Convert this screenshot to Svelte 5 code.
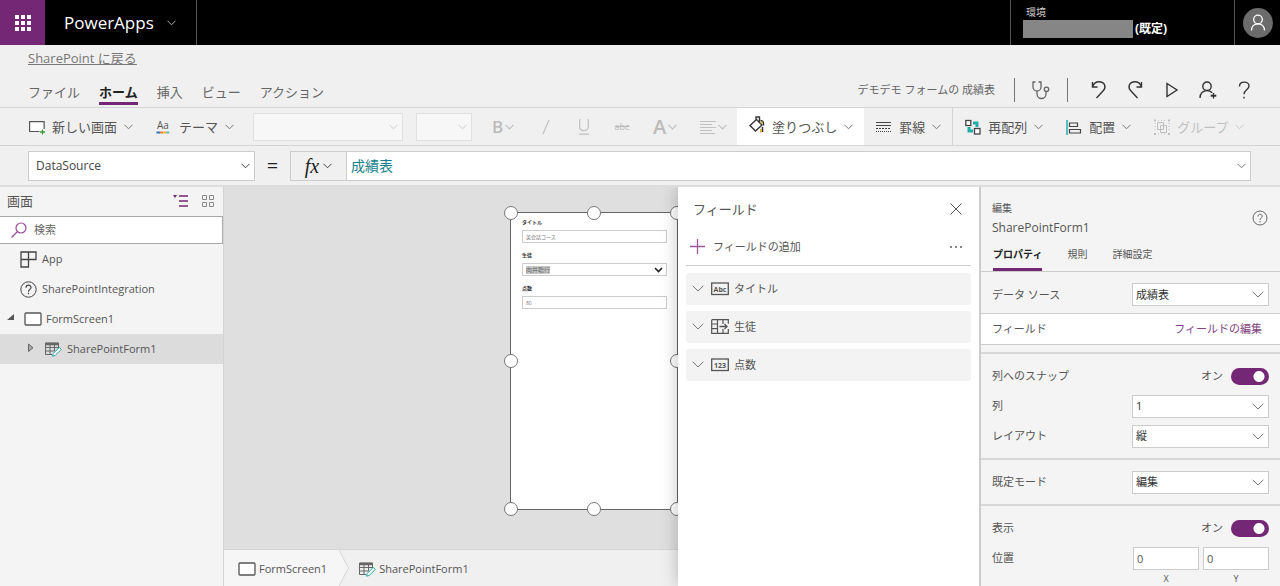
<script>
  let query = $state('');
  let property = $state('DataSource');
  let formula = $state('成績表');
  let snap = $state(true);
  let visible = $state(true);
  let posX = $state('0');
  let posY = $state('0');

  const menus = ['ファイル', 'ホーム', '挿入', 'ビュー', 'アクション'];
  const tabs = ['プロパティ', '規則', '詳細設定'];
  const fields = [
    { name: 'タイトル', kind: 'text' },
    { name: '生徒', kind: 'lookup' },
    { name: '点数', kind: 'number' }
  ];
  const handles = ['nw', 'n', 'ne', 'w', 'e', 'sw', 's', 'se'];
</script>

{#snippet chevron()}
  <svg class="chev" width="9" height="6" viewBox="0 0 9 6"><path d="M.5.8 4.5 4.8 8.5.8" /></svg>
{/snippet}

{#snippet wideChevron()}
  <svg class="chev" width="12" height="7" viewBox="0 0 12 7"><path d="M.7.8 6 6 11.3.8" /></svg>
{/snippet}

{#snippet screenIcon()}
  <svg width="18" height="14" viewBox="0 0 18 14"><rect x="1" y="1" width="16" height="12" rx="1" fill="#fff" stroke="#555" stroke-width="1.3" /></svg>
{/snippet}

{#snippet formIcon()}
  <svg width="17" height="15" viewBox="0 0 17 15" fill="none" stroke="#666">
    <path d="M7 12.5H.5V1h13v5M.5 5.500h13M.5 9h9M5 3v9.500M9.500 3v6" />
    <path d="M.5 2h13" stroke-width="2.5" />
    <path d="m7.500 14.200.8-2.800 6-6 2 2-6 6z" fill="#fff" stroke="#1fa3a3" />
  </svg>
{/snippet}

{#snippet fieldIcon(kind)}
  <svg width="18" height="15" viewBox="0 0 18 15" fill="none" stroke="#555">
    {#if kind === 'lookup'}
      <path d="M6.500.7v13.600M.7.7h16.600v4M.7.7v13.600h16.600V10M.7 5h6M.7 9.700h6M12 .7V5M12 10v4.300" stroke-width="1.2" />
      <path d="M8.500 7.500h8M13.500 5l2.500 2.500-2.500 2.500" stroke-width="1.3" />
    {:else}
      <rect x=".7" y="2" width="16.6" height="11.500" stroke-width="1.3" />
      <text x="9" y="10.500" text-anchor="middle">{kind === 'text' ? 'Abc' : '123'}</text>
    {/if}
  </svg>
{/snippet}

<div class="app">
  <header class="top">
    <button class="waffle" aria-label="アプリ起動ツール">
      <svg width="16" height="16" viewBox="0 0 16 16" fill="#fff">
        {#each [0, 6, 12] as y}
          {#each [0, 6, 12] as x}
            <rect {x} {y} width="4" height="4" />
          {/each}
        {/each}
      </svg>
    </button>
    <button class="brand">PowerApps {@render chevron()}</button>
    <div class="env">
      <span class="env-label">環境</span>
      <div class="env-name"><span class="mask"></span><b>(既定)</b></div>
    </div>
    <button class="account" aria-label="アカウント">
      <svg width="30" height="30" viewBox="0 0 30 30" fill="none" stroke="#fff" stroke-width="1.3">
        <circle cx="15" cy="15" r="15" fill="#6b6b6b" stroke="none" />
        <circle cx="15" cy="11.5" r="4.3" />
        <path d="M8.500 22.500c0-4 2.500-6.700 6.500-6.700s6.500 2.700 6.500 6.700" />
      </svg>
    </button>
  </header>

  <div class="ribbon">
    <div class="ribbon-left">
      <a class="back" href="#sharepoint">SharePoint に戻る</a>
      <nav class="menus">
        {#each menus as menu}
          <button class:active={menu === 'ホーム'}>{menu}</button>
        {/each}
      </nav>
    </div>
    <div class="ribbon-right">
      <span class="doc">デモデモ フォームの 成績表</span>
      <i class="rule"></i>
      <button class="check" aria-label="アプリ チェッカー">
        <svg width="20" height="20" viewBox="0 0 20 20" fill="none" stroke="#666" stroke-width="1.3">
          <path d="M4.500 2H2v5a4 4 0 0 0 8 0V2H7.500M6 11v3a4.500 4.500 0 0 0 9 0v-2.500" />
          <circle cx="15.500" cy="9.300" r="2.200" />
        </svg>
      </button>
      <i class="rule"></i>
      <div class="actions">
        <button aria-label="元に戻す">
          <svg width="20" height="20" viewBox="0 0 20 20"><path d="M2.500 2v5h5M2.500 6.700C4 3 6.500 1.800 9 1.800c6 0 7.500 5.700 4.200 9L6.500 18" /></svg>
        </button>
        <button aria-label="やり直し">
          <svg width="20" height="20" viewBox="0 0 20 20"><path d="M15.500 2v5h-5M15.500 6.700C14 3 11.500 1.800 9 1.800c-6 0-7.500 5.700-4.200 9l6.700 7.200" /></svg>
        </button>
        <button aria-label="プレビュー">
          <svg width="20" height="20" viewBox="0 0 20 20"><path d="M5 3.500v13l10-6.500z" /></svg>
        </button>
        <button aria-label="共有">
          <svg width="20" height="20" viewBox="0 0 20 20"><circle cx="9" cy="6.2" r="4.2" /><path d="M2 18c0-4.500 3-7.400 7-7.400 2.300 0 4 .8 5.200 2.200M15.500 13v5.500" /><path d="M12.700 15.700h5.600" stroke-width="2" /></svg>
        </button>
        <button aria-label="ヘルプ">
          <svg width="20" height="20" viewBox="0 0 20 20"><path d="M5.500 6.500C5.500.5 15 1 15 6c0 3.800-5 3.800-5 8.300M10 16.800v1.700" /></svg>
        </button>
      </div>
    </div>
  </div>

  <div class="toolbar">
    <button class="tool">
      <svg width="16" height="16" viewBox="0 0 16 16" fill="none"><path d="M10.500 12.500H.6V2.600h14.500V10" fill="#fff" stroke="#555" stroke-width="1.2" /><path d="M13.500 10.500v5M11 13h5" stroke="#3a9a3a" stroke-width="1.3" /></svg>
      新しい画面 {@render chevron()}
    </button>
    <button class="tool">
      <svg width="16" height="16" viewBox="0 0 16 16"><text class="aa" x="1" y="10">Aa</text><path d="M.5 13.500h3.500" stroke="#3673b5" stroke-width="2" /><path d="M4 13.500h3.300" stroke="#e8813a" stroke-width="2" /><path d="M7.300 13.500h3" stroke="#e8b23a" stroke-width="2" /><path d="M10.300 13.500h3" stroke="#67b8a8" stroke-width="2" /></svg>
      テーマ {@render chevron()}
    </button>
    <span class="pick font-name"><select disabled aria-label="フォント"><option></option></select>{@render chevron()}</span>
    <span class="pick font-size"><select disabled aria-label="フォント サイズ"><option></option></select>{@render chevron()}</span>
    <div class="text-tools">
      <button class="with-menu" disabled aria-label="太さ"><b>B</b>{@render chevron()}</button>
      <button disabled aria-label="斜体"><svg width="10" height="16" viewBox="0 0 10 16"><path d="M8 1 2 15" /></svg></button>
      <button disabled aria-label="下線"><svg width="12" height="16" viewBox="0 0 12 16"><path d="M1.700 0v7.500c0 5.500 8.600 5.500 8.600 0V0M1 15.200h10" /></svg></button>
      <button disabled class="strike">abc</button>
      <button class="with-menu" disabled aria-label="文字色"><b class="big">A</b>{@render chevron()}</button>
      <button class="with-menu" disabled aria-label="配置">
        <svg width="16" height="16" viewBox="0 0 16 16"><path d="M0 2.500h16M0 5.500h12M0 8.500h16M0 11.500h12M0 14.500h15" /></svg>{@render chevron()}
      </button>
    </div>
    <button class="tool on">
      <svg class="bucket" width="16" height="18" viewBox="0 0 16 18" fill="none"><path d="M7.500 3.500 1 9.500l5.500 5.500 6.500-6L7 3V1h3.500v6" fill="#fff" stroke="#333" stroke-width="1.4" /><path d="M11.500 4.500c2.500 0 3.300 2 3 5M13.500 11v5" stroke="#333" stroke-width="1.5" /><path d="M12.500 5.500v2M12 13v3.500" stroke="#e2b33c" stroke-width="2" /></svg>
      塗りつぶし {@render chevron()}
    </button>
    <button class="tool">
      <svg width="16" height="16" viewBox="0 0 16 16" stroke="#444"><path d="M0 3.500h15M0 6.500h15" /><path d="M0 9.500h15" stroke-dasharray="2 1" /><path d="M0 12.500h15" stroke-dasharray="1 1" /></svg>
      罫線 {@render chevron()}
    </button>
    <i class="split"></i>
    <button class="tool">
      <svg width="16" height="16" viewBox="0 0 16 16" fill="none"><path d="M4 8v4h4M8 4h4v4" stroke="#22adad" stroke-width="3" /><rect x=".8" y="1.5" width="5" height="5" fill="#fff" stroke="#444" stroke-width="1.3" /><rect x="9.5" y="9.5" width="5.500" height="5.500" fill="#fff" stroke="#444" stroke-width="1.3" /></svg>
      再配列 {@render chevron()}
    </button>
    <button class="tool">
      <svg width="16" height="16" viewBox="0 0 16 16" fill="none"><path d="M1 1v15" stroke="#22adad" stroke-width="1.5" /><path d="M3.500 4h8v3.500h-8zM3.500 10.500h11V14h-11z" stroke="#444" stroke-width="1.2" /></svg>
      配置 {@render chevron()}
    </button>
    <button class="tool" disabled>
      <svg width="16" height="16" viewBox="0 0 16 16" fill="none" stroke="#c0c0c0"><path d="M3.500 3.500h6v7h-6zM6.500 6.500h6v7h-6z" /><path d="M0 1.500h2M14 1.500h2M0 15h2M14 15h2" stroke-width="2" /><path d="M4 1.500h8M4 15h8M1 4v9M15 4v9" stroke-dasharray="1 2" /></svg>
      グループ {@render chevron()}
    </button>
  </div>

  <div class="formula">
    <span class="pick property">
      <select bind:value={property} aria-label="プロパティの選択"><option>DataSource</option></select>{@render chevron()}
    </span>
    <span class="equals">=</span>
    <button class="fx"><i>fx</i>{@render chevron()}</button>
    <div class="expression">
      <input bind:value={formula} aria-label="数式" />{@render chevron()}
    </div>
  </div>

  <main class="work">
    <aside class="tree">
      <div class="tree-head">
        <h2>画面</h2>
        <button aria-label="ツリー表示"><svg width="16" height="14" viewBox="0 0 16 14"><path d="M0 1h4L2 4z" fill="#742774" /><path d="M6 2h9M6 7h9M6 12h9" stroke="#742774" stroke-width="1.5" /></svg></button>
        <button aria-label="サムネイル表示"><svg width="14" height="14" viewBox="0 0 14 14" fill="none" stroke="#888"><path d="M1.500 1.500h4v4h-4zM8.500 1.500h4v4h-4zM1.500 8.500h4v4h-4zM8.500 8.500h4v4h-4z" /></svg></button>
      </div>
      <label class="search">
        <svg width="16" height="16" viewBox="0 0 16 16" fill="none" stroke="#9a4a9a" stroke-width="1.2"><circle cx="10" cy="6" r="5" /><path d="M6.500 9.500.5 15.500" /></svg>
        <input bind:value={query} placeholder="検索" aria-label="検索" />
      </label>
      <ul>
        <li class="root">
          <svg width="17" height="17" viewBox="0 0 17 17" fill="none" stroke="#444" stroke-width="1.3"><path d="M1 1h15v7.500H1zM8.500 1v15H1V1" /></svg>
          App
        </li>
        <li class="root">
          <svg width="17" height="17" viewBox="0 0 17 17" fill="none" stroke="#444"><circle cx="8.5" cy="8.5" r="7.7" /><path d="M6 6.700c0-3.500 5-3.300 5-.3 0 2-2.500 2-2.500 4.300M8.500 11.800v1.400" stroke-width="1.2" /></svg>
          SharePointIntegration
        </li>
        <li class="screen">
          <svg width="8" height="16" viewBox="0 0 8 16"><path d="M7 3v6H0z" fill="#555" /></svg>
          {@render screenIcon()} FormScreen1
        </li>
        <li class="control selected">
          <svg width="8" height="16" viewBox="0 0 8 16"><path d="M1.500 3v7.500L6 6.700z" fill="#aaa" stroke="#666" /></svg>
          {@render formIcon()} SharePointForm1
        </li>
      </ul>
    </aside>

    <section class="stage">
      <div class="canvas">
        <div class="form-card">
          <label for="card-title">タイトル</label>
          <input id="card-title" value="英会話コース" />
          <label for="card-student">生徒</label>
          <button id="card-student" class="card-pick"><mark>向井聡行</mark><svg width="9" height="6" viewBox="0 0 9 6"><path d="M1 1l3.500 3.500L8 1" fill="none" stroke="#222" stroke-width="1.6" /></svg></button>
          <label for="card-score">点数</label>
          <input id="card-score" value="80" />
          {#each handles as handle}
            <span class="handle {handle}"></span>
          {/each}
        </div>
      </div>
      <footer class="crumbs">
        <a class="crumb" href="#screen">{@render screenIcon()} FormScreen1</a>
        <svg class="arrow" width="11" height="36" viewBox="0 0 11 36"><path d="M0 0 9.500 18 0 36z" fill="#f6f6f6" /><path d="M0 0 9.500 18 0 36" fill="none" stroke="#d6d6d6" /></svg>
        <a class="crumb last" href="#form">{@render formIcon()} SharePointForm1</a>
      </footer>
      <div class="fields">
        <div class="fields-head">
          <h2>フィールド</h2>
          <button aria-label="閉じる"><svg width="12" height="12" viewBox="0 0 12 12"><path d="M.5.5l11 11M11.500.5l-11 11" stroke="#555" /></svg></button>
        </div>
        <div class="fields-add">
          <button class="add"><svg width="15" height="15" viewBox="0 0 15 15"><path d="M7.500 0v15M0 7.500h15" stroke="#9a5a9a" stroke-width="1.3" /></svg>フィールドの追加</button>
          <button aria-label="その他"><svg width="12" height="2" viewBox="0 0 12 2" fill="#888"><path d="M0 0h2v2H0zM5 0h2v2H5zM10 0h2v2h-2z" /></svg></button>
        </div>
        {#each fields as field}
          <button class="field">{@render wideChevron()}{@render fieldIcon(field.kind)}{field.name}</button>
        {/each}
      </div>
    </section>

    <aside class="props">
      <div class="props-head">
        <div>
          <span class="mode">編集</span>
          <h2>SharePointForm1</h2>
        </div>
        <button aria-label="ヘルプ"><svg width="16" height="16" viewBox="0 0 16 16" fill="none" stroke="#666"><circle cx="8" cy="8" r="7" /><path d="M6 6.500c0-3 4.200-2.800 4.200-.3 0 1.800-2.200 1.800-2.200 3.800M8 11v1.300" /></svg></button>
      </div>
      <nav class="tabs">
        {#each tabs as tab}
          <button class:active={tab === 'プロパティ'}>{tab}</button>
        {/each}
      </nav>
      <div class="row source">
        <label for="source">データ ソース</label>
        <span class="pick"><select id="source"><option>成績表</option></select>{@render wideChevron()}</span>
      </div>
      <div class="row edit">
        <span>フィールド</span>
        <a href="#fields">フィールドの編集</a>
      </div>
      <div class="group">
        <div class="row">
          <label for="snap">列へのスナップ</label>
          <span class="state">オン</span><input id="snap" class="toggle" type="checkbox" bind:checked={snap} />
        </div>
        <div class="row">
          <label for="columns">列</label>
          <span class="pick"><select id="columns"><option>1</option></select>{@render wideChevron()}</span>
        </div>
        <div class="row">
          <label for="layout">レイアウト</label>
          <span class="pick"><select id="layout"><option>縦</option></select>{@render wideChevron()}</span>
        </div>
      </div>
      <div class="group">
        <div class="row">
          <label for="mode">既定モード</label>
          <span class="pick"><select id="mode"><option>編集</option></select>{@render wideChevron()}</span>
        </div>
      </div>
      <div class="group">
        <div class="row">
          <label for="visible">表示</label>
          <span class="state">オン</span><input id="visible" class="toggle" type="checkbox" bind:checked={visible} />
        </div>
        <div class="row">
          <span>位置</span>
          <div class="pair">
            <input id="pos-x" bind:value={posX} />
            <input id="pos-y" bind:value={posY} />
          </div>
        </div>
        <div class="axes">
          <label for="pos-x">X</label>
          <label for="pos-y">Y</label>
        </div>
      </div>
    </aside>
  </main>
</div>

<style>
  :global(body) {
    background: #f0f0f0;
  }
  .app {
    display: flex;
    flex-direction: column;
    height: 100vh;
    overflow: hidden;
    background: #f0f0f0;
    color: #555;
    font: 13px/20px "Open Sans", "Noto Sans CJK JP", sans-serif;
  }
  .app * {
    box-sizing: border-box;
  }
  svg {
    flex: none;
  }
  button, input, select {
    margin: 0;
    padding: 0;
    border: 0;
    border-radius: 0;
    background: none;
    color: inherit;
    font: inherit;
    outline: none;
  }
  button {
    display: flex;
    align-items: center;
    white-space: nowrap;
  }
  h2 {
    margin: 0;
    font-weight: 400;
  }
  a {
    color: inherit;
    text-decoration: none;
  }
  .chev {
    fill: none;
    stroke: #777;
  }

  .top {
    display: flex;
    flex: none;
    height: 45px;
    background: #000;
    color: #fff;
  }
  .waffle {
    width: 45px;
    justify-content: center;
    background: #742774;
  }
  .brand {
    gap: 13px;
    padding: 0 20px 0 19px;
    border-right: 1px solid #555;
    font-size: 17px;
  }
  .brand .chev {
    stroke: #aaa;
  }
  .env {
    width: 225px;
    margin-left: auto;
    padding: 4px 12px;
    border: 1px solid #555;
    border-width: 0 1px;
  }
  .env-label {
    display: block;
    padding-left: 3px;
    color: #ccc;
    font-size: 10px;
    line-height: 16px;
  }
  .env-name {
    display: flex;
    align-items: center;
    gap: 2px;
    line-height: 18px;
    font-size: 12px;
  }
  .mask {
    width: 110px;
    height: 18px;
    background: #868686;
  }
  .account {
    width: 45px;
    justify-content: center;
  }

  .ribbon {
    display: flex;
    flex: none;
    justify-content: space-between;
    height: 63px;
    border-bottom: 1px solid #d4d4d4;
  }
  .ribbon-left {
    display: flex;
    flex-direction: column;
    align-items: flex-start;
    padding: 3px 0 2px 28px;
  }
  .back {
    color: #777;
    text-decoration: underline;
  }
  .menus {
    display: flex;
    gap: 19px;
    margin-top: auto;
  }
  .menus button {
    border-bottom: 3px solid transparent;
    color: #666;
  }
  .menus .active {
    border-color: #742774;
    color: #222;
    font-weight: 700;
  }
  .ribbon-right {
    display: flex;
    align-items: center;
    align-self: flex-end;
    height: 34px;
    padding-right: 18px;
  }
  .doc {
    margin-right: 19px;
    color: #666;
    font-size: 11px;
  }
  .rule {
    width: 1px;
    height: 24px;
    background: #777;
  }
  .check {
    margin: 0 16px;
  }
  .actions {
    display: flex;
    margin-left: 14px;
  }
  .actions button {
    width: 36px;
    justify-content: center;
  }
  .actions svg {
    fill: none;
    stroke: #333;
    stroke-width: 1.4;
  }

  .toolbar {
    display: flex;
    flex: none;
    align-items: center;
    height: 38px;
    padding-left: 17px;
    border-bottom: 1px solid #d4d4d4;
  }
  .tool {
    gap: 7px;
    height: 37px;
    padding: 0 11px 0 12px;
    color: #555;
  }
  .tool:disabled {
    color: #c0c0c0;
  }
  .tool:disabled .chev {
    stroke: #c8c8c8;
  }
  .tool.on {
    background: #fff;
  }
  .bucket {
    margin-bottom: 4px;
  }
  .aa {
    font-size: 10px;
    fill: #555;
  }
  .split {
    width: 1px;
    height: 37px;
    background: #d4d4d4;
  }
  .pick {
    display: grid;
    align-items: center;
    background: #fff;
    border: 1px solid #ccc;
  }
  .pick > :global(*) {
    grid-area: 1 / 1;
  }
  .pick select {
    width: 100%;
    height: 100%;
    appearance: none;
    opacity: 1;
  }
  .pick .chev {
    justify-self: end;
    margin-right: 4px;
    pointer-events: none;
  }
  .font-name, .font-size {
    height: 28px;
    background: #f7f7f7;
    border-color: #e0e0e0;
  }
  .font-name {
    width: 150px;
    margin: 0 13px 0 8px;
  }
  .font-size {
    width: 56px;
    margin-right: 7px;
  }
  .font-name .chev, .font-size .chev {
    stroke: #c8c8c8;
  }
  .text-tools {
    display: flex;
    color: #bbb;
  }
  .text-tools button {
    width: 38px;
    height: 37px;
    justify-content: center;
  }
  .text-tools .with-menu {
    width: 48px;
    gap: 2px;
  }
  .text-tools svg {
    fill: none;
    stroke: #c0c0c0;
    stroke-width: 1.2;
  }
  .text-tools b {
    font-size: 17px;
    font-weight: 600;
  }
  .text-tools .big {
    font-size: 20px;
  }
  .text-tools .strike {
    font-size: 9px;
    text-decoration: line-through;
  }

  .formula {
    display: flex;
    flex: none;
    align-items: center;
    height: 41px;
    padding: 0 29px 0 28px;
    border-bottom: 2px solid #ddd;
  }
  .property {
    width: 227px;
    height: 30px;
    color: #444;
    font-size: 12px;
  }
  .property select {
    padding-left: 7px;
  }
  .property .chev, .fx .chev {
    stroke: #444;
  }
  .equals {
    width: 35px;
    color: #222;
    font-size: 20px;
    text-align: center;
  }
  .fx {
    width: 56px;
    height: 30px;
    gap: 4px;
    justify-content: center;
    border: 1px solid #ccc;
    border-right: 0;
  }
  .fx i {
    color: #222;
    font: italic 20px/20px "Liberation Serif", serif;
  }
  .expression {
    display: flex;
    flex: 1;
    align-items: center;
    height: 30px;
    padding: 0 4px;
    background: #fff;
    border: 1px solid #ccc;
  }
  .expression input {
    flex: 1;
    color: #14808a;
    font-size: 14px;
  }

  .work {
    display: flex;
    flex: 1;
    min-height: 0;
  }
  .tree {
    width: 224px;
    flex: none;
    background: #f4f4f4;
    border-right: 1px solid #d4d4d4;
  }
  .tree-head {
    display: flex;
    align-items: center;
    height: 29px;
    padding: 0 8px 2px 7px;
    gap: 12px;
  }
  .tree-head h2 {
    margin-right: auto;
    font-size: 13px;
  }
  .search {
    display: flex;
    align-items: center;
    gap: 7px;
    height: 28px;
    padding-left: 11px;
    background: #fff;
    border: 1px solid #aaa;
    border-left: 0;
    font-size: 11px;
  }
  .search input {
    width: 100%;
  }
  .search input::placeholder {
    color: #666;
  }
  ul {
    margin: 0;
    padding: 0;
    list-style: none;
  }
  li {
    display: flex;
    align-items: center;
    gap: 5px;
    height: 30px;
    font-size: 11px;
  }
  .root {
    padding-left: 20px;
  }
  .screen {
    gap: 4px;
    padding-left: 7px;
  }
  .screen svg:first-child {
    margin-right: 5px;
  }
  .control {
    padding-left: 27px;
  }
  .control svg:first-child {
    margin-right: 5px;
  }
  .selected {
    background: #dcdcdc;
  }

  .stage {
    display: flex;
    flex: 1;
    flex-direction: column;
    position: relative;
    min-width: 0;
    overflow: hidden;
  }
  .canvas {
    flex: 1;
    position: relative;
    background: #dfdfdf;
  }
  .form-card {
    position: absolute;
    top: 25px;
    left: 286px;
    width: 168px;
    height: 298px;
    padding: 4px 11px;
    background: #fff;
    border: 1px solid #666;
    color: #333;
    font-size: 5px;
    line-height: 10px;
  }
  .form-card label {
    display: block;
    font-weight: 700;
  }
  .form-card input, .card-pick {
    display: flex;
    width: 145px;
    height: 13px;
    margin: 3px 0 7px;
    padding: 0 3px;
    justify-content: space-between;
    border: 1px solid #ccc;
    color: #777;
  }
  mark {
    background: #c8c8c8;
    color: #666;
    font-size: 6px;
    line-height: 8px;
  }
  .handle {
    position: absolute;
    width: 14px;
    height: 14px;
    margin: -7px;
    border: 1px solid #777;
    border-radius: 50%;
    background: #fff;
  }
  .nw, .n, .ne { top: 0; }
  .w, .e { top: 50%; }
  .sw, .s, .se { top: 100%; }
  .nw, .w, .sw { left: 0; }
  .n, .s { left: 50%; }
  .ne, .e, .se { left: 100%; }
  .crumbs {
    display: flex;
    flex: none;
    align-items: center;
    height: 37px;
    border-top: 1px solid #d4d4d4;
    background: #f0f0f0;
    font-size: 11px;
  }
  .crumb {
    display: flex;
    align-items: center;
    gap: 3px;
    height: 36px;
    padding: 2px 12px 0 14px;
    background: #f6f6f6;
  }
  .crumb.last {
    padding-left: 9px;
    background: none;
  }
  .fields {
    position: absolute;
    top: 0;
    right: 0;
    bottom: 0;
    width: 301px;
    padding: 0 8px;
    background: #fff;
    box-shadow: 0 0 16px rgba(0, 0, 0, 0.25);
    font-size: 11px;
  }
  .fields-head, .fields-add {
    display: flex;
    align-items: center;
    justify-content: space-between;
    padding: 0 9px 2px 7px;
  }
  .fields-head {
    height: 45px;
  }
  .fields-head h2 {
    font-size: 13px;
  }
  .fields-add {
    height: 34px;
    margin-bottom: 7px;
    padding: 0 9px 4px 4px;
    border-bottom: 1px solid #ccc;
  }
  .add {
    gap: 8px;
  }
  .field {
    width: 100%;
    height: 32px;
    gap: 5px;
    margin-bottom: 6px;
    padding: 0 0 1px 6px;
    border-radius: 3px;
    background: #f3f3f3;
  }
  .field .chev {
    margin-right: 2px;
  }
  .field text {
    fill: #555;
    stroke: none;
    font-size: 7px;
    font-weight: 700;
  }

  .props {
    width: 301px;
    flex: none;
    overflow: hidden;
    border-left: 2px solid #ccc;
    background: #f4f4f4;
    font-size: 11px;
  }
  .props-head {
    display: flex;
    align-items: center;
    justify-content: space-between;
    height: 54px;
    padding: 7px 12px 0 11px;
  }
  .mode {
    display: block;
    font-size: 10px;
  }
  .props-head h2 {
    font-size: 12px;
  }
  .tabs {
    display: flex;
    gap: 25px;
    padding: 3px 12px 0;
    border-bottom: 1px solid #ccc;
    font-size: 10px;
  }
  .tabs button {
    padding-bottom: 4px;
    border-bottom: 3px solid transparent;
  }
  .tabs .active {
    border-color: #742774;
    color: #222;
    font-weight: 700;
  }
  .row {
    display: flex;
    align-items: center;
    height: 30px;
    padding: 0 11px;
  }
  .row > :first-child {
    margin-right: auto;
  }
  .row .pick {
    width: 137px;
    height: 23px;
    color: #333;
  }
  .row select {
    padding-left: 3px;
  }
  .source {
    height: 42px;
    padding-top: 4px;
    border-bottom: 1px solid #ccc;
  }
  .edit {
    height: 31px;
    padding-right: 18px;
    border-bottom: 1px solid #ccc;
    background: #fff;
  }
  .edit a {
    color: #823f82;
  }
  .edit + .group {
    margin-top: 7px;
  }
  .group {
    padding: 7px 0;
    border-top: 2px solid #d8d8d8;
  }
  .state {
    margin-right: 8px;
  }
  .toggle {
    width: 38px;
    height: 17px;
    appearance: none;
    border-radius: 9px;
    background: #aaa radial-gradient(circle at 10px 50%, #fff 5px, transparent 6px);
  }
  .toggle:checked {
    background: #742774 radial-gradient(circle at 28px 50%, #fff 5px, transparent 6px);
  }
  .pair, .axes {
    display: flex;
    gap: 4px;
  }
  .pair input {
    width: 66px;
    height: 23px;
    padding-left: 3px;
    background: #fff;
    border: 1px solid #ccc;
  }
  .axes {
    justify-content: flex-end;
    padding-right: 11px;
    font-size: 9px;
    line-height: 12px;
  }
  .axes label {
    width: 66px;
    text-align: center;
  }
</style>
